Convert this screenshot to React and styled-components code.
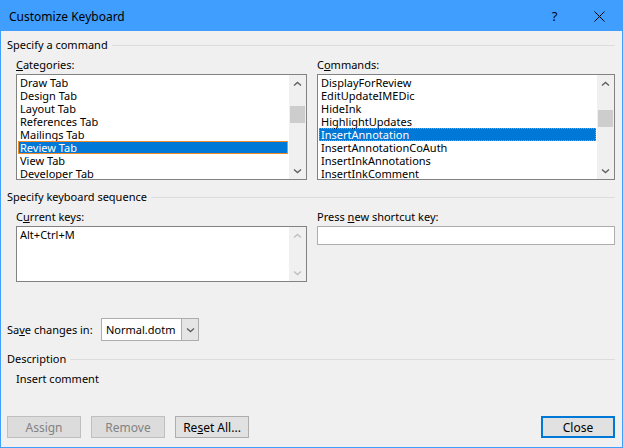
import React from "react";
import styled, { createGlobalStyle } from "styled-components";

const GlobalStyle = createGlobalStyle`
  html, body {
    margin: 0;
    padding: 0;
    background: #f0f0f0;
  }
  * {
    box-sizing: border-box;
  }
`;

const Dialog = styled.div`
  width: 623px;
  height: 448px;
  border: 1px solid #409eff;
  background: #f0f0f0;
  font-family: "Noto Sans", "Open Sans", sans-serif;
  font-size: 11px;
  color: #000;
  display: flex;
  flex-direction: column;
  overflow: hidden;
`;

const TitleBar = styled.div`
  height: 30px;
  background: #409eff;
  display: flex;
  align-items: center;
  padding-left: 8px;
  flex-shrink: 0;
`;

const Title = styled.div`
  flex: 1;
  font-size: 12px;
  color: #000;
`;

const TitleButton = styled.div`
  width: 45px;
  height: 30px;
  display: flex;
  align-items: center;
  justify-content: center;
  font-size: 13px;
`;

const Body = styled.div`
  flex: 1;
  padding: 0 7px 0 6px;
  display: flex;
  flex-direction: column;
`;

const GroupHeader = styled.div`
  margin-top: ${(p) => p.$top}px;
  display: flex;
  align-items: center;
  line-height: 14px;
  height: 14px;
  &::after {
    content: "";
    flex: 1;
    height: 1px;
    background: #dcdcdc;
    margin-left: 4px;
  }
`;

const Columns = styled.div`
  display: grid;
  grid-template-columns: 291px 298px;
  column-gap: 10px;
  padding-left: 9px;
`;

const Column = styled.div`
  display: flex;
  flex-direction: column;
`;

const FieldLabel = styled.div`
  margin-top: 6px;
  line-height: 14px;
  height: 14px;
`;

const Key = styled.span`
  text-decoration: underline;
`;

const ListBox = styled.div`
  margin-top: 2px;
  height: ${(p) => p.$height}px;
  border: 1px solid #828282;
  background: #fff;
  display: flex;
  overflow: hidden;
`;

const Items = styled.div`
  flex: 1;
  padding: 1px 1px 0 1px;
  overflow: hidden;
`;

const Item = styled.div`
  height: 13px;
  line-height: 13px;
  padding-left: 2px;
  white-space: nowrap;
  color: ${(p) => (p.$selected ? "#fff" : "#000")};
  background: ${(p) => (p.$selected ? "#0078d7" : "transparent")};
  outline: ${(p) =>
    p.$selected ? `1px ${p.$dotted ? "dotted" : "solid"} #f08a24` : "none"};
  outline-offset: -1px;
`;

const ScrollBar = styled.div`
  width: 17px;
  background: #f0f0f0;
  display: flex;
  flex-direction: column;
  align-items: center;
`;

const Arrow = styled.div`
  height: 17px;
  width: 17px;
  display: flex;
  align-items: center;
  justify-content: center;
  color: ${(p) => (p.$disabled ? "#bfbfbf" : "#606060")};
`;

const Thumb = styled.div`
  width: 15px;
  height: 17px;
  background: #cdcdcd;
`;

const Track = styled.div`
  flex: 1;
  display: flex;
  flex-direction: column;
  align-items: center;
  padding-top: ${(p) => p.$offset || 0}px;
`;

const TextBox = styled.div`
  margin-top: 2px;
  height: 19px;
  border: 1px solid #adadad;
  background: #fff;
`;

const SaveRow = styled.div`
  margin-top: 36px;
  display: flex;
  align-items: center;
`;

const SaveLabel = styled.div`
  width: 94px;
  white-space: nowrap;
`;

const Select = styled.div`
  width: 98px;
  height: 23px;
  border: 1px solid #adadad;
  background: #fff;
  display: flex;
`;

const SelectValue = styled.div`
  flex: 1;
  padding-left: 4px;
  display: flex;
  align-items: center;
  font-size: 11px;
  white-space: nowrap;
  overflow: hidden;
`;

const SelectButton = styled.div`
  width: 17px;
  background: #e5e5e5;
  border-left: 1px solid #adadad;
  display: flex;
  align-items: center;
  justify-content: center;
  color: #606060;
`;

const Description = styled.div`
  margin-top: 6px;
  padding-left: 9px;
  line-height: 14px;
`;

const ButtonRow = styled.div`
  margin-top: 30px;
  display: flex;
  gap: 10px;
`;

const Button = styled.div`
  width: 74px;
  height: 22px;
  display: flex;
  align-items: center;
  justify-content: center;
  background: ${(p) => (p.$disabled ? "#dcdcdc" : "#e1e1e1")};
  border: ${(p) =>
    p.$default ? "2px solid #0078d7" : p.$disabled ? "1px solid #bfbfbf" : "1px solid #adadad"};
  color: ${(p) => (p.$disabled ? "#838383" : "#000")};
  margin-left: ${(p) => (p.$push ? "auto" : "0")};
  font-size: 12px;
`;

function Chevron({ down }) {
  return (
    <svg width="9" height="6" viewBox="0 0 9 6">
      <path
        d={down ? "M1 1.5 L4.5 4.5 L8 1.5" : "M1 4.5 L4.5 1.5 L8 4.5"}
        fill="none"
        stroke="currentColor"
        strokeWidth="1.4"
      />
    </svg>
  );
}

function Scroll({ thumbOffset, disabled }) {
  return (
    <ScrollBar>
      <Arrow $disabled={disabled}>
        <Chevron />
      </Arrow>
      <Track $offset={thumbOffset}>{!disabled && <Thumb />}</Track>
      <Arrow $disabled={disabled}>
        <Chevron down />
      </Arrow>
    </ScrollBar>
  );
}

const categories = [
  "Draw Tab",
  "Design Tab",
  "Layout Tab",
  "References Tab",
  "Mailings Tab",
  "Review Tab",
  "View Tab",
  "Developer Tab",
];

const commands = [
  "DisplayForReview",
  "EditUpdateIMEDic",
  "HideInk",
  "HighlightUpdates",
  "InsertAnnotation",
  "InsertAnnotationCoAuth",
  "InsertInkAnnotations",
  "InsertInkComment",
];

export default function App() {
  return (
    <>
      <GlobalStyle />
      <Dialog>
        <TitleBar>
          <Title>Customize Keyboard</Title>
          <TitleButton>?</TitleButton>
          <TitleButton>
            <svg width="11" height="11" viewBox="0 0 11 11">
              <path d="M0.5 0.5 L10.5 10.5 M10.5 0.5 L0.5 10.5" stroke="#000" strokeWidth="1" />
            </svg>
          </TitleButton>
        </TitleBar>
        <Body>
          <GroupHeader $top={7}>Specify a command</GroupHeader>
          <Columns>
            <Column>
              <FieldLabel>
                <Key>C</Key>ategories:
              </FieldLabel>
              <ListBox $height={106}>
                <Items>
                  {categories.map((c) => (
                    <Item key={c} $selected={c === "Review Tab"}>
                      {c}
                    </Item>
                  ))}
                </Items>
                <Scroll thumbOffset={14} />
              </ListBox>
            </Column>
            <Column>
              <FieldLabel>
                C<Key>o</Key>mmands:
              </FieldLabel>
              <ListBox $height={106}>
                <Items>
                  {commands.map((c) => (
                    <Item key={c} $selected={c === "InsertAnnotation"} $dotted>
                      {c}
                    </Item>
                  ))}
                </Items>
                <Scroll thumbOffset={18} />
              </ListBox>
            </Column>
          </Columns>

          <GroupHeader $top={10}>Specify keyboard sequence</GroupHeader>
          <Columns>
            <Column>
              <FieldLabel>
                C<Key>u</Key>rrent keys:
              </FieldLabel>
              <ListBox $height={56}>
                <Items>
                  <Item>Alt+Ctrl+M</Item>
                </Items>
                <Scroll disabled />
              </ListBox>
            </Column>
            <Column>
              <FieldLabel>
                Press <Key>n</Key>ew shortcut key:
              </FieldLabel>
              <TextBox />
            </Column>
          </Columns>

          <SaveRow>
            <SaveLabel>
              Sa<Key>v</Key>e changes in:
            </SaveLabel>
            <Select>
              <SelectValue>Normal.dotm</SelectValue>
              <SelectButton>
                <Chevron down />
              </SelectButton>
            </Select>
          </SaveRow>

          <GroupHeader $top={11}>Description</GroupHeader>
          <Description>Insert comment</Description>

          <ButtonRow>
            <Button $disabled>Assign</Button>
            <Button $disabled>Remove</Button>
            <Button>
              Re<Key>s</Key>et All...
            </Button>
            <Button $default $push>
              Close
            </Button>
          </ButtonRow>
        </Body>
      </Dialog>
    </>
  );
}
